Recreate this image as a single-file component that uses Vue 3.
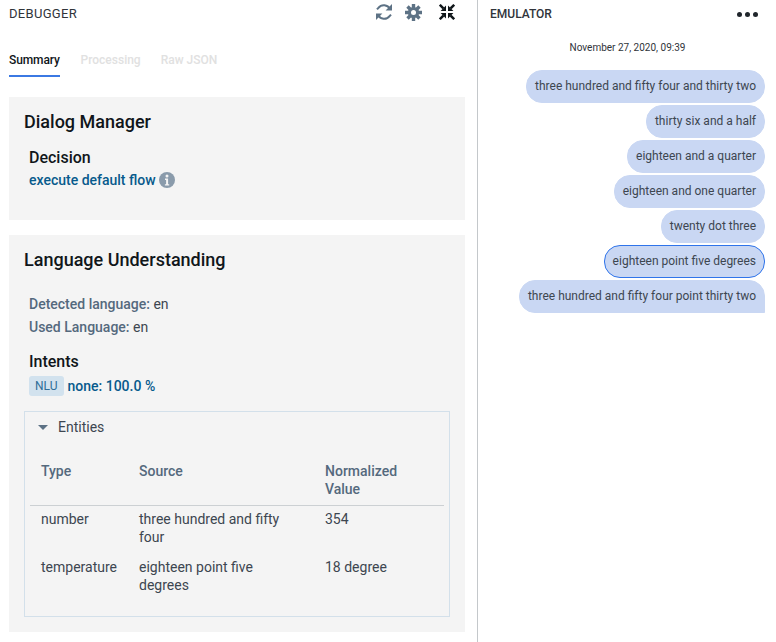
<script setup>
const messages = [
  { text: 'three hundred and fifty four and thirty two' },
  { text: 'thirty six and a half' },
  { text: 'eighteen and a quarter' },
  { text: 'eighteen and one quarter' },
  { text: 'twenty dot three' },
  { text: 'eighteen point five degrees', selected: true },
  { text: 'three hundred and fifty four point thirty two' }
]
const rows = [
  { type: 'number', source: 'three hundred and fifty four', value: '354' },
  { type: 'temperature', source: 'eighteen point five degrees', value: '18 degree' }
]
</script>

<template>
  <div class="app">
    <section class="debugger">
      <header class="head">
        <span class="title">DEBUGGER</span>
        <div class="tools">
          <svg width="18" height="18" viewBox="0 0 18 18" fill="none" stroke="#5d7285" stroke-width="2.1">
            <path d="M15 5.9A6.9 6.9 0 0 0 3.4 4.9L2 6.4" />
            <path d="M3 12.1A6.9 6.9 0 0 0 14.6 13.1L16 11.6" />
            <path d="M17 1v6.4h-6.4z" fill="#5d7285" stroke="none" />
            <path d="M1 17v-6.4h6.4z" fill="#5d7285" stroke="none" />
          </svg>
          <svg width="17" height="17" viewBox="0 0 17 17">
            <g stroke="#5d7285" stroke-width="3.4">
              <path d="M8.5 0v17M0 8.5h17M2.5 2.5l12 12M14.5 2.5l-12 12" />
            </g>
            <circle cx="8.5" cy="8.5" r="5.6" fill="#5d7285" />
            <circle cx="8.5" cy="8.5" r="2.5" fill="#fff" />
          </svg>
          <svg class="collapse" width="16" height="16" viewBox="0 0 16 16" fill="#10161a" stroke="#10161a" stroke-width="2.5">
            <g>
              <path d="M7 1.6V7H1.6z" stroke="none" />
              <path d="M.8.8l3.6 3.6" />
            </g>
            <g transform="matrix(-1 0 0 1 16 0)">
              <path d="M7 1.6V7H1.6z" stroke="none" />
              <path d="M.8.8l3.6 3.6" />
            </g>
            <g transform="matrix(1 0 0 -1 0 16)">
              <path d="M7 1.6V7H1.6z" stroke="none" />
              <path d="M.8.8l3.6 3.6" />
            </g>
            <g transform="matrix(-1 0 0 -1 16 16)">
              <path d="M7 1.6V7H1.6z" stroke="none" />
              <path d="M.8.8l3.6 3.6" />
            </g>
          </svg>
        </div>
      </header>

      <nav class="tabs">
        <span class="tab active">Summary</span>
        <span class="tab">Processing</span>
        <span class="tab">Raw JSON</span>
      </nav>

      <div class="card dialog">
        <h2>Dialog Manager</h2>
        <div class="indent">
          <h3>Decision</h3>
          <div class="flow">
            <span class="link">execute default flow</span>
            <svg width="16" height="16" viewBox="0 0 16 16">
              <circle cx="8" cy="8" r="8" fill="#8a9bab" />
              <circle cx="8" cy="4" r="1.5" fill="#f4f4f4" />
              <path d="M6 6.6h3.1v5.6H10.2v1.3H5.9v-1.3h1.2V7.9H6z" fill="#f4f4f4" />
            </svg>
          </div>
        </div>
      </div>

      <div class="card lang">
        <h2>Language Understanding</h2>
        <div class="indent">
          <p class="meta"><b>Detected language:</b> en</p>
          <p class="meta"><b>Used Language:</b> en</p>
          <h3 class="intents">Intents</h3>
          <div class="intent">
            <span class="tag">NLU</span>
            <span class="link">none: 100.0 %</span>
          </div>
        </div>
        <div class="entities">
          <div class="summary"><i class="caret"></i><span>Entities</span></div>
          <div class="table">
            <div class="row th">
              <span>Type</span><span>Source</span><span>Normalized Value</span>
            </div>
            <div v-for="r in rows" :key="r.type" class="row td">
              <span>{{ r.type }}</span><span>{{ r.source }}</span><span>{{ r.value }}</span>
            </div>
          </div>
        </div>
      </div>
    </section>

    <section class="emulator">
      <header class="ehead">
        <span class="etitle">EMULATOR</span>
        <span class="dots"><i></i><i></i><i></i></span>
      </header>
      <div class="date">November 27, 2020, 09:39</div>
      <div class="msgs">
        <div v-for="m in messages" :key="m.text" class="bubble" :class="{ selected: m.selected }">{{ m.text }}</div>
      </div>
    </section>
  </div>
</template>

<style>
html, body { margin: 0; background: #fff; overflow: hidden; }
</style>

<style scoped>
.app {
  display: flex;
  width: 776px;
  height: 642px;
  overflow: hidden;
  font-family: Roboto, "Liberation Sans", sans-serif;
  color: #10161a;
}
.debugger {
  width: 456px;
  height: 642px;
  border-right: 1px solid #c4c8cb;
  padding: 0 12px 0 9px;
}
.head {
  height: 28px;
  display: flex;
  align-items: center;
  justify-content: space-between;
}
.title { font-size: 13px; letter-spacing: 0.3px; color: #30343a; margin-bottom: 1px; }
.tools { display: flex; align-items: center; gap: 12px; margin: 0 10px 4px 0; }
.collapse { margin-left: 5px; }
.tabs {
  display: flex;
  gap: 20px;
  margin-top: 18px;
  height: 31px;
}
.tab {
  font-size: 12px;
  font-weight: 500;
  line-height: 28px;
  color: #e1e1e1;
  height: 31px;
  box-sizing: border-box;
}
.tab.active { color: #10161a; border-bottom: 2px solid #3b79e3; letter-spacing: -0.1px; margin-right: 0.7px; }
.card {
  background: #f4f4f4;
  padding: 0 15px;
  box-sizing: border-box;
}
.dialog { margin-top: 20px; height: 123px; }
.lang { margin-top: 15px; height: 397px; }
h2 {
  margin: 0;
  font-size: 18px;
  font-weight: 500;
  line-height: 22px;
  padding-top: 14px;
  color: #10161a;
}
h3 {
  margin: 0;
  font-size: 16px;
  font-weight: 500;
  line-height: 20px;
  color: #10161a;
}
.indent { padding-left: 5px; }
.dialog h3 { margin-top: 15px; }
.flow { display: flex; align-items: center; gap: 3px; margin-top: 2px; height: 20px; }
.link { font-size: 14px; font-weight: 500; color: #075a8c; }
.meta {
  margin: 0;
  font-size: 14px;
  line-height: 23px;
  color: #3d4650;
}
.meta b { font-weight: 500; color: #54697d; }
.meta:first-child { margin-top: 22px; }
.intents { margin-top: 13px; }
.intent { display: flex; align-items: center; gap: 4px; margin-top: 4px; height: 20px; }
.tag {
  background: #d2e2ee;
  color: #2f6e98;
  font-size: 12px;
  line-height: 20px;
  padding: 0 6px;
  border-radius: 3px;
}
.entities {
  margin-top: 15px;
  height: 206px;
  box-sizing: border-box;
  border: 1px solid #d3e0ea;
  padding: 0 5px;
}
.summary {
  display: flex;
  align-items: center;
  height: 30px;
  padding-left: 8px;
  font-size: 14px;
  color: #3d4650;
}
.caret {
  width: 0;
  height: 0;
  border-left: 5px solid transparent;
  border-right: 5px solid transparent;
  border-top: 5px solid #5d7285;
  margin-right: 10px;
}
.table { margin-top: 20px; }
.row {
  display: grid;
  grid-template-columns: 98px 186px 1fr;
  padding-left: 11px;
  font-size: 14px;
  line-height: 18px;
  color: #3d4650;
}
.row span:nth-child(2) { padding-right: 30px; }
.row span:nth-child(3) { padding-right: 20px; }
.row.th {
  font-weight: 500;
  color: #54697d;
  padding-bottom: 7px;
  border-bottom: 1px solid #ccd0d3;
}
.row.td { padding-top: 5px; padding-bottom: 7px; }
.row.th + .row.td { padding-top: 4px; }
.emulator { flex: 1; min-width: 0; }
.ehead {
  height: 28px;
  display: flex;
  align-items: center;
  justify-content: space-between;
  padding: 0 18px 0 12px;
}
.etitle { font-size: 12px; font-weight: 500; color: #30343a; }
.dots { display: flex; gap: 3px; }
.dots i { width: 5px; height: 5px; border-radius: 50%; background: #20262c; }
.date {
  margin-top: 14px;
  text-align: center;
  font-size: 10px;
  line-height: 12px;
  color: #30343a;
  padding-left: 1px;
}
.msgs {
  margin-top: 16px;
  display: flex;
  flex-direction: column;
  align-items: flex-end;
  gap: 2px;
  padding-right: 11px;
}
.bubble {
  background: #c9d7f3;
  border: 1px solid #c9d7f3;
  border-radius: 16px;
  box-sizing: border-box;
  height: 33px;
  line-height: 31px;
  padding: 0 8px;
  font-size: 12px;
  color: #3d4650;
  white-space: nowrap;
}
.bubble:last-child { border-bottom-right-radius: 0; }
.bubble.selected { border-color: #2f74ea; }
</style>
